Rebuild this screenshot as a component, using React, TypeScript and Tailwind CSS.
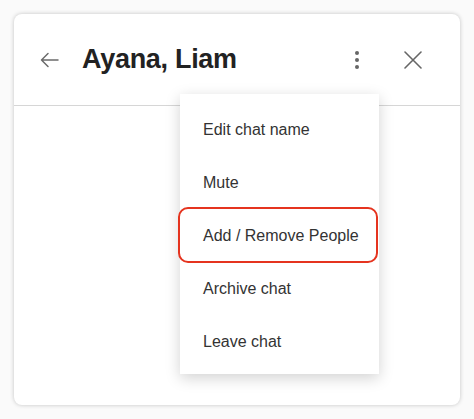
import React from 'react';

const items = ['Edit chat name', 'Mute', 'Add / Remove People', 'Archive chat', 'Leave chat'];

const App: React.FC = () => {
  return (
    <div className="w-[474px] h-[419px] bg-[#fafafa] p-[14px] font-['Liberation_Sans',Arial,sans-serif]">
      <div className="relative w-[446px] h-[391px] bg-white rounded-[8px] shadow-[0_0_4px_rgba(0,0,0,0.22)] overflow-hidden">
        <div className="flex items-center h-[92px] border-b border-[#d6d6d6] pl-[26px] pr-[38px]">
          <svg width="19" height="16" viewBox="0 0 19 16" fill="none" stroke="#6b6b6b" strokeWidth="1.5" strokeLinecap="round" strokeLinejoin="round">
            <path d="M18 8H1.5M8 1.5L1.5 8L8 14.5" />
          </svg>
          <h1 className="ml-[23px] text-[27px] font-bold tracking-[-0.3px] text-[#222] leading-none">Ayana, Liam</h1>
          <div className="ml-auto flex items-center gap-[45px]">
            <div className="flex flex-col gap-[3px]">
              <span className="w-[4px] h-[4px] rounded-full bg-[#666]" />
              <span className="w-[4px] h-[4px] rounded-full bg-[#666]" />
              <span className="w-[4px] h-[4px] rounded-full bg-[#666]" />
            </div>
            <svg width="18" height="18" viewBox="0 0 18 18" fill="none" stroke="#666" strokeWidth="1.6" strokeLinecap="round">
              <path d="M1 1L17 17M17 1L1 17" />
            </svg>
          </div>
        </div>

        <div className="absolute left-[166px] top-[80px] w-[199px] bg-white pt-[9px] pb-[6px] shadow-[0_4px_14px_rgba(0,0,0,0.18)]">
          {items.map((label, i) => (
            <div key={label} className="relative flex items-center h-[53px] px-[23px] text-[16px] text-[#333] whitespace-nowrap">
              {label}
              {i === 2 && (
                <span className="absolute left-[-2px] right-[1px] top-[-2px] bottom-[-1px] border-2 border-[#e5341f] rounded-[10px]" />
              )}
            </div>
          ))}
        </div>
      </div>
    </div>
  );
};

export default App;
